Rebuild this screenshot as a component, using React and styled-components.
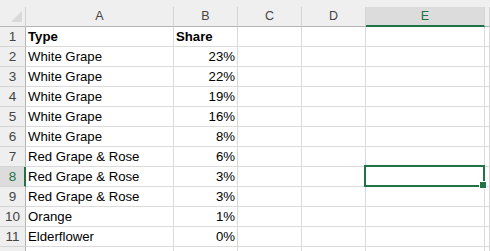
import React from 'react'
import styled, { createGlobalStyle } from 'styled-components'

const GREEN = '#217346'
const COLS = '26px 148px 64px 64px 64px 119px 1fr'

const rows = [
    ['Type', 'Share', true],
    ['White Grape', '23%'],
    ['White Grape', '22%'],
    ['White Grape', '19%'],
    ['White Grape', '16%'],
    ['White Grape', '8%'],
    ['Red Grape & Rose', '6%'],
    ['Red Grape & Rose', '3%'],
    ['Red Grape & Rose', '3%'],
    ['Orange', '1%'],
    ['Elderflower', '0%'],
    ['', ''],
]

const letters = ['A', 'B', 'C', 'D', 'E', '']
const SEL_ROW = 8
const SEL_COL = 'E'
const LAST_ROW = 11

const App = () => (
    <>
        <GlobalStyle />
        <Sheet>
            <HeaderRow>
                <Corner><Triangle /></Corner>
                {letters.map((l, i) => (
                    <ColHeader key={i} $active={l === SEL_COL}>{l}</ColHeader>
                ))}
            </HeaderRow>
            {rows.map(([type, share, bold], i) => {
                const n = i + 1
                return (
                    <Row key={n}>
                        <RowHeader $active={n === SEL_ROW}>{n <= LAST_ROW ? n : ''}</RowHeader>
                        <Cell $bold={bold}>{type}</Cell>
                        <Cell $bold={bold} $right={!bold}>{share}</Cell>
                        <Cell />
                        <Cell />
                        <Cell>
                            {n === SEL_ROW && (
                                <>
                                    <Selection />
                                    <FillHandle />
                                </>
                            )}
                        </Cell>
                        <Cell />
                    </Row>
                )
            })}
        </Sheet>
    </>
)

export default App

const GlobalStyle = createGlobalStyle`
    html, body {
        margin: 0;
        padding: 0;
        background: #fff;
        overflow: hidden;
    }
    body {
        font-family: "Liberation Sans", Arial, sans-serif;
    }
`

const Sheet = styled.div`
    width: 490px;
    height: 251px;
    overflow: hidden;
    display: flex;
    flex-direction: column;
    background: #fff;
`

const HeaderRow = styled.div`
    display: grid;
    grid-template-columns: ${COLS};
    padding-top: 7px;
    background: #efefef;
    flex-shrink: 0;
`

const Corner = styled.div`
    position: relative;
    height: 20px;
    box-sizing: border-box;
    border-bottom: 1px solid #b5b5b5;
    border-right: 1px solid #d4d4d4;
`

const Triangle = styled.div`
    position: absolute;
    left: 11px;
    top: 4px;
    width: 11px;
    height: 11px;
    background: #d9d9d9;
    clip-path: polygon(100% 0, 100% 100%, 0 100%);
`

const ColHeader = styled.div`
    height: 20px;
    box-sizing: border-box;
    overflow: hidden;
    border-right: 1px solid #d4d4d4;
    border-bottom: ${p => (p.$active ? `2px solid ${GREEN}` : '1px solid #b5b5b5')};
    background: ${p => (p.$active ? '#dcdcdc' : 'transparent')};
    color: ${p => (p.$active ? GREEN : '#444')};
    font-size: 12.5px;
    line-height: 18px;
    text-align: center;
`

const Row = styled.div`
    display: grid;
    grid-template-columns: ${COLS};
    height: 20px;
    flex-shrink: 0;
`

const RowHeader = styled.div`
    box-sizing: border-box;
    height: 20px;
    background: ${p => (p.$active ? '#dcdcdc' : '#efefef')};
    border-bottom: 1px solid #d4d4d4;
    border-right: ${p => (p.$active ? `2px solid ${GREEN}` : '1px solid #b5b5b5')};
    color: ${p => (p.$active ? GREEN : '#444')};
    font-size: 13.5px;
    line-height: 20px;
    text-align: center;
    padding-left: ${p => (p.$active ? '1px' : '0')};
`

const Cell = styled.div`
    position: relative;
    box-sizing: border-box;
    height: 20px;
    border-right: 1px solid #dadada;
    border-bottom: 1px solid #dadada;
    padding: 0 2px;
    font-size: 13.2px;
    line-height: 20px;
    font-weight: ${p => (p.$bold ? 700 : 400)};
    text-align: ${p => (p.$right ? 'right' : 'left')};
    color: #000;
    white-space: nowrap;
`

const Selection = styled.div`
    position: absolute;
    left: -2px;
    top: -2px;
    right: -1px;
    bottom: -1px;
    border: 2px solid ${GREEN};
    z-index: 2;
`

const FillHandle = styled.div`
    position: absolute;
    right: -2px;
    bottom: -2px;
    width: 6px;
    height: 6px;
    background: ${GREEN};
    box-shadow: 0 0 0 1px #fff;
    z-index: 3;
`
